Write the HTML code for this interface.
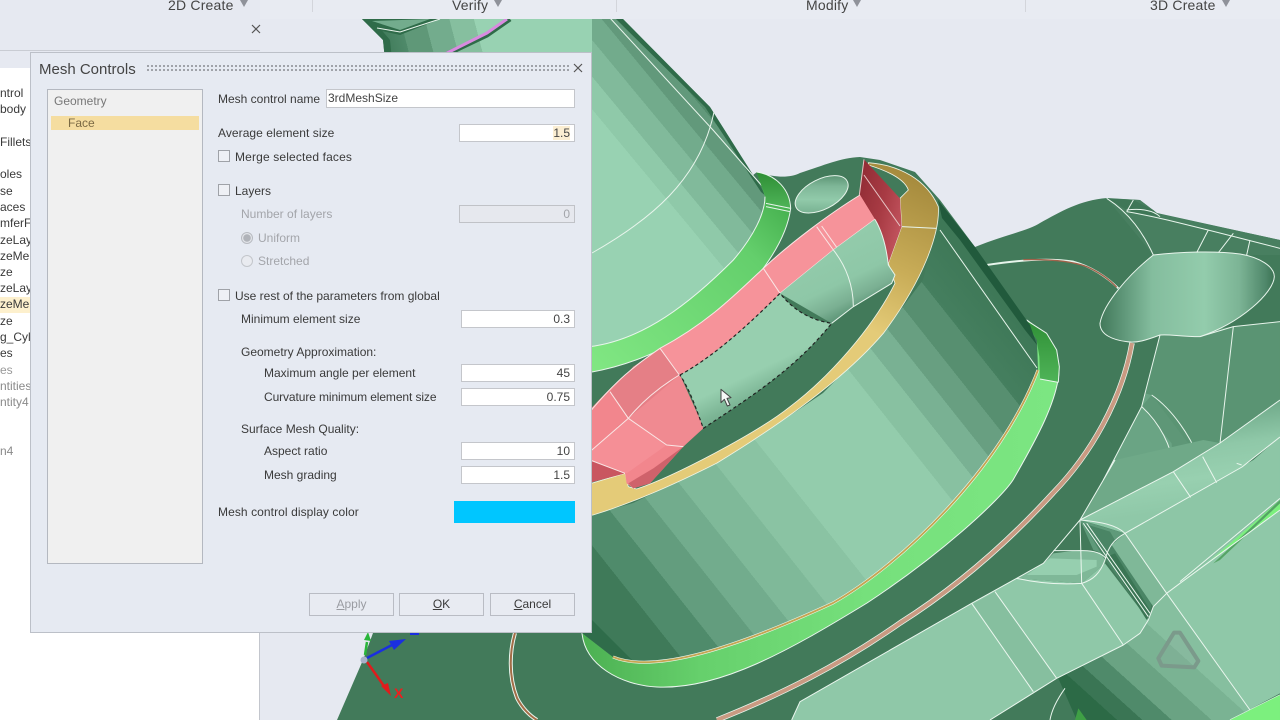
<!DOCTYPE html>
<html><head><meta charset="utf-8"><style>
html,body{margin:0;padding:0;width:1280px;height:720px;overflow:hidden;background:#e6e9f1}
body{position:relative;font-family:"Liberation Sans",sans-serif;font-size:12px;color:#3a3a3a;filter:blur(.3px)}
.a{position:absolute;white-space:nowrap;line-height:16px}
.in{position:absolute;box-sizing:border-box;background:#fff;border:1px solid #c4c6cb;text-align:right;padding-right:4px;line-height:17px;font-size:12px;color:#444}
.cb{position:absolute;box-sizing:border-box;width:12px;height:12px;background:#eef0f5;border:1px solid #9fa2a8}
.btn{position:absolute;box-sizing:border-box;top:593px;width:86px;height:23px;border:1px solid #b9bcc4;background:#e8ebf2;text-align:center;line-height:21px;font-size:12px}
.top{position:absolute;top:-4px;font-size:14px;line-height:18px;color:#444;letter-spacing:.2px}
.tri{position:absolute;top:0;width:0;height:0;border-left:4px solid transparent;border-right:4px solid transparent;border-top:7px solid #8f929a}
.sep{position:absolute;top:0;width:1px;height:12px;background:#d3d5db}
.t{position:absolute;left:0;white-space:nowrap;line-height:16px;color:#3a3a3a}
</style></head><body>
<svg width="1280" height="720" viewBox="0 0 1280 720" style="position:absolute;left:0;top:0" fill="none" stroke-linejoin="round">
<defs>
<linearGradient id="cyl" gradientUnits="userSpaceOnUse" x1="590" y1="600" x2="988" y2="284">
<stop offset="0" stop-color="#3f7a59"/><stop offset=".07" stop-color="#3f7a59"/><stop offset=".07" stop-color="#4f8b6b"/><stop offset=".14" stop-color="#4f8b6b"/><stop offset=".14" stop-color="#639d7e"/><stop offset=".21" stop-color="#639d7e"/><stop offset=".21" stop-color="#72ac8d"/><stop offset=".28" stop-color="#72ac8d"/><stop offset=".28" stop-color="#7fb999"/><stop offset=".36" stop-color="#7fb999"/><stop offset=".36" stop-color="#8ac3a3"/><stop offset=".45" stop-color="#8ac3a3"/><stop offset=".45" stop-color="#93ccac"/><stop offset=".68" stop-color="#93ccac"/><stop offset=".68" stop-color="#88c1a1"/><stop offset=".74" stop-color="#88c1a1"/><stop offset=".74" stop-color="#79b193"/><stop offset=".79" stop-color="#79b193"/><stop offset=".79" stop-color="#689f81"/><stop offset=".84" stop-color="#689f81"/><stop offset=".84" stop-color="#578f70"/><stop offset=".9" stop-color="#578f70"/><stop offset=".9" stop-color="#457f5f"/><stop offset="1" stop-color="#3e7857"/>
</linearGradient>
<linearGradient id="neck" gradientUnits="userSpaceOnUse" x1="540" y1="250" x2="740" y2="84">
<stop offset="0" stop-color="#98d2b2"/><stop offset=".5" stop-color="#98d2b2"/><stop offset=".5" stop-color="#8fc9a9"/><stop offset=".58" stop-color="#8fc9a9"/><stop offset=".58" stop-color="#81ba9b"/><stop offset=".67" stop-color="#81ba9b"/><stop offset=".67" stop-color="#72ab8c"/><stop offset=".75" stop-color="#72ab8c"/><stop offset=".75" stop-color="#62997b"/><stop offset=".83" stop-color="#62997b"/><stop offset=".83" stop-color="#528b6b"/><stop offset=".91" stop-color="#528b6b"/><stop offset=".91" stop-color="#437c5c"/><stop offset="1" stop-color="#3a7352"/>
</linearGradient>
<linearGradient id="topg" gradientUnits="userSpaceOnUse" x1="385" y1="55" x2="500" y2="25">
<stop offset="0" stop-color="#3f7a59"/><stop offset=".2" stop-color="#4f8a6a"/><stop offset=".2" stop-color="#5f9878"/><stop offset=".4" stop-color="#5f9878"/><stop offset=".4" stop-color="#73ac8d"/><stop offset=".6" stop-color="#73ac8d"/><stop offset=".6" stop-color="#86bf9f"/><stop offset=".8" stop-color="#86bf9f"/><stop offset=".8" stop-color="#98d2b2"/><stop offset="1" stop-color="#98d2b2"/>
</linearGradient>
<linearGradient id="gold" x1=".9" y1="0" x2=".7" y2=".42"><stop offset="0" stop-color="#a3883b"/><stop offset=".6" stop-color="#c9ad58"/><stop offset="1" stop-color="#e4cb78"/></linearGradient>
<linearGradient id="hole1" x1="0" y1="0" x2="1" y2="0"><stop offset="0" stop-color="#42795a"/><stop offset=".13" stop-color="#5e9678"/><stop offset=".3" stop-color="#84bd9e"/><stop offset=".6" stop-color="#93ccac"/><stop offset=".8" stop-color="#7cb495"/><stop offset=".95" stop-color="#4f876a"/><stop offset="1" stop-color="#3b7253"/></linearGradient>
<linearGradient id="hole2" x1="0" y1="1" x2="1" y2="0"><stop offset="0" stop-color="#6aa383"/><stop offset=".4" stop-color="#91caaa"/><stop offset=".65" stop-color="#7fb798"/><stop offset="1" stop-color="#447c5c"/></linearGradient>
<linearGradient id="sel" x1=".35" y1=".3" x2=".65" y2=".85"><stop offset="0" stop-color="#97cfaf"/><stop offset=".5" stop-color="#97cfaf"/><stop offset=".75" stop-color="#7cb595"/><stop offset="1" stop-color="#669f7f"/></linearGradient>
<linearGradient id="rgt" x1=".35" y1=".2" x2=".7" y2=".85"><stop offset="0" stop-color="#94ccac"/><stop offset=".6" stop-color="#8ec7a7"/><stop offset=".85" stop-color="#7aaf92"/><stop offset="1" stop-color="#5f9779"/></linearGradient>
<linearGradient id="red" x1="0" y1="0" x2="1" y2=".6"><stop offset="0" stop-color="#8e2a33"/><stop offset=".6" stop-color="#a83b44"/><stop offset="1" stop-color="#c0525c"/></linearGradient>
<linearGradient id="chan" gradientUnits="userSpaceOnUse" x1="800" y1="700" x2="1083" y2="387"><stop offset="0" stop-color="#2c6a46"/><stop offset=".1" stop-color="#2c6a46"/><stop offset=".1" stop-color="#3a7554"/><stop offset=".22" stop-color="#3a7554"/><stop offset=".22" stop-color="#4f8a6a"/><stop offset=".36" stop-color="#4f8a6a"/><stop offset=".36" stop-color="#6aa383"/><stop offset=".55" stop-color="#6aa383"/><stop offset=".55" stop-color="#7ab393"/><stop offset=".75" stop-color="#7ab393"/><stop offset=".75" stop-color="#86bf9f"/><stop offset="1" stop-color="#86bf9f"/></linearGradient>
<linearGradient id="tube" x1=".45" y1=".1" x2=".6" y2=".8"><stop offset="0" stop-color="#6ea888"/><stop offset=".4" stop-color="#8fc8a8"/><stop offset=".7" stop-color="#98d0b0"/><stop offset="1" stop-color="#8fc8a8"/></linearGradient>
<linearGradient id="ringtop" x1="0" y1="0" x2="0" y2="1"><stop offset="0" stop-color="#2f8f36"/><stop offset="1" stop-color="#4fb458"/></linearGradient>
<linearGradient id="ring2" x1="1" y1="0" x2="0" y2="1"><stop offset="0" stop-color="#3aa443"/><stop offset=".3" stop-color="#64cf6c"/><stop offset="1" stop-color="#82e884"/></linearGradient>
<linearGradient id="ring3" x1="0" y1="0" x2="1" y2="0"><stop offset="0" stop-color="#4cb052"/><stop offset=".25" stop-color="#66d06c"/><stop offset=".6" stop-color="#76e07c"/><stop offset="1" stop-color="#7ce682"/></linearGradient>
</defs>

<!-- main dark body -->
<path fill="#427a5a" d="M337,720L363,660L373,633L592,300L757,172C775,178 790,178 800,173C825,165 840,158 860,157L880,160L915,172L940,200L975,247C1005,235 1030,230 1040,223C1060,212 1080,200 1107,198L1140,200L1157,213L1280,240L1280,720Z"/>

<!-- right side of model, zoom-6 coordinates -->
<g transform="translate(940 180) scale(.33333)">
<path fill="#487f60" d="M500,55L640,225L1020,225L1020,180L650,100L600,60Z"/>
<path fill="#3f7757" d="M500,55L580,60L640,90L660,110L570,95Z"/>
<path fill="#5a9473" d="M660,465L880,440L1020,425L1020,660L955,705L840,790L775,830L700,860L605,680L615,640Z"/>
<path fill="#6aa484" d="M615,640L605,680L490,900L660,900L775,830L700,760L635,645Z"/>
<path fill="#5e9777" d="M635,645L775,830L700,870L695,790L605,680Z"/>
<path fill="url(#hole1)" stroke="#e8f5ec" stroke-width="3" d="M480,430C490,370 570,280 640,225C720,215 830,212 900,222C960,232 1003,260 1003,290C1000,340 900,430 780,470C720,470 690,462 660,465C620,480 590,490 560,485C520,480 480,465 480,430Z"/>
<path stroke="#e8f5ec" stroke-width="3" d="M500,55C570,100 610,160 640,225M580,60L560,95M560,95C620,105 650,110 1020,205M560,90C600,85 640,90 660,110M805,150L770,218M880,160L835,218M930,180L920,225M660,465L615,640L605,680L490,900M880,440L840,790M780,470L880,440L1020,425M635,645C700,690 750,770 775,830L825,900M605,680C660,730 695,800 700,860M840,790L905,860M955,705L1020,770"/>
<path stroke="#e8f5ec" stroke-width="6" d="M140,255C250,238 340,235 400,245C450,258 500,290 535,325"/>
<path stroke="#a0624a" stroke-width="4" d="M250,239C340,237 400,245 440,260C480,278 510,300 530,322"/>
</g>
<!-- copper main ring -->
<path stroke="#e8f5ec" stroke-width="5.5" d="M1132,343C1122,400 1090,455 1053,493C1010,540 960,585 900,623C840,665 780,695 717,720"/>
<path stroke="#c99a82" stroke-width="4" d="M1132,343C1122,400 1090,455 1053,493C1010,540 960,585 900,623C840,665 780,695 717,720"/>

<!-- lower right, zoom-7 coordinates -->
<g transform="translate(800 460) scale(.33333)">
<path fill="#6fa988" d="M945,0L840,180L1120,35L1260,-51L1210,-60Z"/>
<path fill="#8fc8a8" d="M1100,400L1140,370L1440,120L1440,700L1290,780L1350,750Z"/>
<path fill="#8dc6a6" d="M975,220L1360,0L1440,-69L1440,120L1140,370L1100,400Z"/>
<path fill="url(#tube)" d="M840,180L1120,35L1260,-51L1440,-180L1440,-69L1326,21L975,220L910,200Z"/>
<path fill="#7cf07e" d="M1140,370L1210,320L1440,120L1440,150L1100,400Z"/>
<path fill="#55a465" d="M1240,310L1440,120L1440,130L1260,300Z"/>
<path fill="url(#chan)" d="M1045,480L1060,440L1100,400L1350,750L1300,780L830,780L775,655L1020,520Z"/>
<path fill="#8fc8a8" d="M650,355L845,370L915,310L1045,480L1020,520L970,555L770,655L570,780L-25,780L0,725L515,430Z"/>
<path fill="#86bf9f" d="M520,432L585,395L770,655L700,695Z"/>
<path fill="#7fb898" d="M730,310L650,355L845,370L915,310L920,280L840,270L760,280Z"/>
<path fill="#96cfaf" d="M680,345L830,345L890,320L890,300L750,295Z"/>
<path fill="#5f9a7a" d="M840,180L975,220L920,285L880,270Z"/>
<path fill="#4a8565" d="M850,190L930,215L1055,430L1045,480L915,300Z"/>
<path fill="#7fb898" d="M975,220L1100,400L1060,440L935,255Z"/>
<path fill="#3a7554" d="M920,290L945,280L1050,450L1040,480Z"/>
<path stroke="#eaf6ee" stroke-width="3" d="M945,0L840,180L730,310L650,355L515,430L0,725L-25,780M840,180L1120,35L1260,-51L1440,-180M975,220L1326,21L1440,-69M840,180C900,185 950,195 975,220L1100,400L1350,750M975,220C940,240 925,260 915,300C900,340 880,360 845,370C780,375 720,370 650,355M760,272L850,272C880,272 905,280 918,295M840,180L845,370L970,555M850,190L1045,470M860,190L1050,460M1020,520L1045,480L1060,440L1100,400L1140,370L1440,150M1020,520L970,555L770,655L570,780M515,430L700,695M585,395L770,655M1120,35L1172,112M1208,-10L1250,68M1310,10L1325,15"/>
<path stroke="#eaf6ee" stroke-width="3" d="M1140,365L1440,115M1290,780L1440,705"/>
<path fill="#7cf07e" d="M1290,780L1440,705L1440,780Z"/>
<path stroke="#e8f5ec" stroke-width="3" d="M795,685C770,720 755,750 750,780"/>
<path fill="#3f9f45" d="M825,780L835,745L860,780Z"/>
<path fill="#8aa69a" fill-opacity=".25" d="M1122,518L1140,518L1195,603L1183,622L1085,617L1075,595Z"/>
<path stroke="#7b9a8b" stroke-width="12" d="M1122,518L1140,518L1195,603L1183,622L1085,617L1075,595Z"/>
</g>

<!-- copper left, bottom -->
<path stroke="#e8f5ec" stroke-width="4" d="M515,633C510,650 508,675 517,698C522,708 530,716 537,720"/>
<path stroke="#a36d47" stroke-width="2" d="M515,633C510,650 508,675 517,698C522,708 530,716 537,720"/>

<!-- bottom bright ring -->
<path fill="url(#ring3)" d="M582,633C585,665 620,685 657,687C720,690 790,650 867,603C940,555 1000,500 1013,480C1030,450 1060,400 1059,367C1058,345 1040,330 1027,320L1038,370C1000,470 900,565 833,603C720,655 650,672 613,657Z"/>
<path stroke="#eaf6ee" stroke-width="1" d="M582,633C585,665 620,685 657,687C720,690 790,650 867,603C940,555 1000,500 1013,480C1030,450 1060,400 1059,367C1058,345 1040,330 1027,320"/>
<g transform="translate(940 180) scale(.33333)">
<path fill="url(#ringtop)" d="M255,420L320,460L350,510L358,560L355,607L300,597L298,530L290,480Z"/>
<path stroke="#eaf6ee" stroke-width="3" d="M255,418L320,460L350,510L358,560L355,607M300,597L355,607"/>
</g>

<!-- lower cylinder -->
<path fill="url(#cyl)" d="M580,518L592,515L633,503L717,463L757,438L823,393L883,333L923,280L937,227L938,200L975,247L1037,340L1038,370C1000,470 900,565 833,603C720,655 650,672 613,657L582,633Z"/>
<path fill="#215a3c" d="M938,200L975,247L1030,325L1037,345L1025,330L960,240L942,218Z"/>
<path fill="#2f6c4a" d="M582,633L592,620L632,660L613,657Z"/>
<path stroke="#e8f5ec" stroke-width="1" d="M940,230L1037,368"/>
<path stroke="#eaf6ee" stroke-width="3" d="M613,657C650,672 720,655 833,603C900,565 1000,470 1038,370"/>
<path stroke="#c5a552" stroke-width="1.8" d="M613,657C650,672 720,655 833,603C900,565 1000,470 1038,370"/>

<!-- neck -->
<path fill="url(#neck)" d="M592,19L623,19L710,107L767,197L760,260L700,320L592,365Z"/>
<path fill="#2f6b49" d="M616,19L623,19L710,107L767,197L761,192L705,107Z"/>
<path stroke="#e8f5ec" stroke-width="1" d="M592,253C650,220 700,180 714,112M610,18L713,130L763,187"/>
<path fill="url(#topg)" d="M362,19L592,19L592,60L385,60L383,40Z"/>
<path fill="#2f6b49" d="M362,19L372,19L390,40L392,60L385,60L383,40Z"/>
<path fill="#2f6b49" d="M362,19L440,19L400,35L378,30Z"/>
<path fill="#73ac8d" d="M372,21L430,19L400,30Z"/>
<path stroke="#e8f5ec" stroke-width="1" d="M377,28L400,32L440,19"/>
<path stroke="#2f6b49" stroke-width="5" d="M510,19L487,35L447,54"/>
<path stroke="#d98ae0" stroke-width="3" d="M507,19L487,33L445,54"/>

<g transform="translate(590 140) scale(.33333)">
<!-- neck ring -->
<path fill="url(#ring2)" d="M-20,700L0,697C160,670 300,590 400,510C510,420 590,300 602,205C600,150 560,105 500,96L525,170C525,220 490,290 430,360C300,490 160,600 0,620L-20,622Z"/>
<path fill="url(#ringtop)" d="M500,98C560,105 600,150 602,205L530,195L525,165Z"/>
<path stroke="#e8f5ec" stroke-width="3" d="M0,697C160,670 300,590 400,510C510,420 590,300 602,205C600,150 560,105 500,96M528,190L602,205M528,200L600,215M525,170C525,220 490,290 430,360C300,490 160,600 0,620"/>

<!-- lug hole -->
<ellipse cx="695" cy="163" rx="86" ry="45" transform="rotate(-27 695 163)" fill="url(#hole2)" stroke="#e8f5ec" stroke-width="3"/>

<!-- gold -->
<path fill="url(#gold)" stroke="#eef3e4" stroke-width="2.5" d="M835,68C930,75 1010,120 1045,200C1050,280 1000,420 880,580C760,720 560,860 381,969C260,1030 129,1089 9,1125L-30,1130L-30,1040L105,1000L115,1040L140,1047C250,1010 500,880 600,800C720,710 850,560 915,430L895,370L935,260L930,175L955,150C945,120 900,95 835,75Z"/>
<path stroke="#e8f5ec" stroke-width="3" d="M935,260L1040,265"/>

<!-- dark red -->
<path fill="url(#red)" d="M822,58L930,175L935,260L895,370L855,238L808,165Z"/>
<path stroke="#e6c5c5" stroke-width="3" d="M822,58L808,165M822,105L930,258"/>

<!-- pink -->
<path fill="#f2868d" d="M-10,820C80,720 130,680 210,625C350,550 430,470 520,385C600,310 720,220 810,165L855,238L730,330L570,460C470,560 370,650 270,705L340,865L280,920L180,1030L130,1045L110,1030L105,1000L-10,1030Z"/>
<path fill="#f6939a" d="M210,625C350,550 430,470 520,385C600,310 720,220 810,165L855,238L730,330L570,460C470,560 370,650 270,705Z"/>
<path fill="#e57f86" d="M60,755L130,680L210,625L268,705L115,835Z"/>
<path fill="#f08a91" d="M115,835L270,705L340,860L280,920L230,915Z"/>
<path fill="#ea7f87" d="M115,835L80,860L120,920L230,915Z"/>
<path fill="#f58f96" d="M0,935L115,835L230,915L110,1000L0,960Z"/>
<path fill="#c95660" d="M0,960L105,1000L0,1028Z"/>
<path fill="#cf626b" d="M280,920L180,1030L130,1045L115,1030L190,985Z"/>
<path stroke="#f9e6e5" stroke-width="3" d="M0,815C80,720 130,680 210,625C350,550 430,470 520,385C600,310 720,220 810,165M210,625L268,705M60,755L115,835L230,915L280,920M0,935L115,835C160,780 210,740 268,705M520,385L570,460M680,260L730,330M695,258L740,322M855,238L730,330L570,460M0,960L105,1000"/>

<!-- green selected + right -->
<path fill="url(#rgt)" d="M570,460L730,330L855,238C880,280 890,330 895,375L915,405L905,430L790,500L725,550Z"/>
<path fill="url(#sel)" d="M270,705C370,650 470,560 570,460C610,510 660,540 725,550C620,680 500,760 340,865C320,810 300,750 270,705Z"/>
<path stroke="#e8f5ec" stroke-width="3" d="M730,330C770,380 790,440 790,500M855,238C880,280 890,330 895,375L915,405L905,430L790,500L725,550"/>
<path stroke="#222" stroke-width="3.5" stroke-dasharray="10 8" d="M270,705C370,650 470,560 570,460C610,510 660,540 725,550C620,680 500,760 340,865C320,810 300,750 270,705Z"/>

<!-- cursor -->
<path fill="#f5f8f6" stroke="#444" stroke-width="3" d="M393,748L393,788L403,778L412,798L420,795L411,775L423,773Z"/>
</g>

<!-- background panel layers -->
<rect x="0" y="0" width="1280" height="19" fill="#e8ebf2"/>
<rect x="0" y="0" width="260" height="720" fill="#e6e9f1"/>
<rect x="0" y="68" width="32" height="570" fill="#fff"/>
<rect x="0" y="50" width="260" height="1" fill="#c9ccd3"/>
<rect x="0" y="630" width="259" height="90" fill="#fff"/>
<rect x="259" y="630" width="1" height="90" fill="#c3c6cd"/>

<!-- triad -->
<path stroke="#2ab53a" stroke-width="2.5" d="M365,655L367,642"/><path fill="#2ab53a" d="M364,640L368,632L371,641Z"/>
<path stroke="#1a2fe0" stroke-width="2.5" d="M367,658L392,645"/><path fill="#1a2fe0" d="M389,641L406,639L394,650Z"/>
<path stroke="#e01c1c" stroke-width="2.5" d="M367,662L384,686"/><path fill="#e01c1c" d="M381,686L388,683L391,696Z"/>
<circle cx="364" cy="660" r="3.5" fill="#a9b0c9"/>
<path fill="#1a2fe0" d="M410,632H419V635H410Z"/>
</svg>
<div class="a" style="left:394px;top:685px;color:#f01d1d;font-size:14px;font-weight:bold;line-height:16px">X</div>

<!-- toolbar -->
<div class="top" style="left:168px">2D Create</div><div class="tri" style="left:240px"></div><div class="sep" style="left:312px"></div>
<div class="top" style="left:452px">Verify</div><div class="tri" style="left:494px"></div><div class="sep" style="left:616px"></div>
<div class="top" style="left:806px">Modify</div><div class="tri" style="left:853px"></div><div class="sep" style="left:1025px"></div>
<div class="top" style="left:1150px">3D Create</div><div class="tri" style="left:1222px"></div>
<svg width="12" height="12" style="position:absolute;left:250px;top:23px" fill="none" stroke="#555" stroke-width="1.2"><path d="M2,2L10,10M10,2L2,10"/></svg>

<!-- tree clip -->
<div style="position:absolute;left:0;top:68px;width:30px;height:570px;overflow:hidden">
<div style="position:absolute;left:0;top:229px;width:30px;height:16px;background:#fdf0cd"></div>
<div class="t" style="top:17px">ntrol</div>
<div class="t" style="top:33px">body</div>
<div class="t" style="top:66px">Fillets</div>
<div class="t" style="top:98px">oles</div>
<div class="t" style="top:115px">se</div>
<div class="t" style="top:131px">aces</div>
<div class="t" style="top:147px">mferF</div>
<div class="t" style="top:164px">zeLay</div>
<div class="t" style="top:180px">zeMe</div>
<div class="t" style="top:196px">ze</div>
<div class="t" style="top:212px">zeLay</div>
<div class="t" style="top:228px">zeMer</div>
<div class="t" style="top:245px">ze</div>
<div class="t" style="top:261px">g_Cyli</div>
<div class="t" style="top:277px">es</div>
<div class="t" style="top:294px;color:#999">es</div>
<div class="t" style="top:310px;color:#8a8a8a">ntities_</div>
<div class="t" style="top:326px;color:#8a8a8a">ntity4</div>
<div class="t" style="top:375px;color:#8a8a8a">n4</div>
</div>

<!-- dialog -->
<div style="position:absolute;left:30px;top:52px;width:562px;height:581px;box-sizing:border-box;background:#e6eaf2;border:1px solid #bcc0c8"></div>
<div class="a" style="left:39px;top:62px;font-size:15px;color:#444">Mesh Controls</div>
<div style="position:absolute;left:147px;top:65px;width:422px;height:8px;background-image:radial-gradient(circle at 1px 1px,#8d9096 .9px,transparent 1.1px);background-size:4px 4px"></div>
<svg width="12" height="12" style="position:absolute;left:572px;top:62px" fill="none" stroke="#555" stroke-width="1.2"><path d="M2,2L10,10M10,2L2,10"/></svg>

<div style="position:absolute;left:47px;top:89px;width:156px;height:475px;box-sizing:border-box;background:#f0f0f0;border:1px solid #b4b8c0"></div>
<div class="a" style="left:54px;top:93px;color:#777">Geometry</div>
<div style="position:absolute;left:51px;top:116px;width:148px;height:14px;background:#f5dda0"></div>
<div class="a" style="left:68px;top:115px;color:#7b6a44">Face</div>

<div class="a" style="left:218px;top:91px">Mesh control name</div>
<div class="in" style="left:326px;top:89px;width:249px;height:19px;text-align:left;padding-left:1px">3rdMeshSize</div>
<div class="a" style="left:218px;top:125px;letter-spacing:.06px">Average element size</div>
<div class="in" style="left:459px;top:124px;width:116px;height:18px;line-height:16px"><span style="background:#fbeed2">1.5</span></div>
<div class="cb" style="left:218px;top:150px"></div><div class="a" style="left:235px;top:149px;letter-spacing:.15px">Merge selected faces</div>
<div class="cb" style="left:218px;top:184px"></div><div class="a" style="left:235px;top:183px">Layers</div>
<div class="a" style="left:241px;top:206px;color:#a3a5aa">Number of layers</div>
<div class="in" style="left:459px;top:205px;width:116px;height:18px;background:#e6e8ee;color:#a3a5aa;line-height:16px;border-color:#c0c2c7">0</div>
<div style="position:absolute;left:241px;top:232px;width:12px;height:12px;box-sizing:border-box;border-radius:50%;border:1px solid #b8bbc1;background:radial-gradient(circle,#b0b3b9 3.5px,#e3e5ea 4px)"></div>
<div class="a" style="left:258px;top:230px;color:#a3a5aa">Uniform</div>
<div style="position:absolute;left:241px;top:255px;width:12px;height:12px;box-sizing:border-box;border-radius:50%;border:1px solid #c3c6cb;background:#e9ebf0"></div>
<div class="a" style="left:258px;top:253px;color:#a3a5aa">Stretched</div>
<div class="cb" style="left:218px;top:289px"></div><div class="a" style="left:235px;top:288px">Use rest of the parameters from global</div>
<div class="a" style="left:241px;top:311px">Minimum element size</div>
<div class="in" style="left:461px;top:310px;width:114px;height:18px;line-height:16px">0.3</div>
<div class="a" style="left:241px;top:344px">Geometry Approximation:</div>
<div class="a" style="left:264px;top:365px">Maximum angle per element</div>
<div class="in" style="left:461px;top:364px;width:114px;height:18px;line-height:16px">45</div>
<div class="a" style="left:264px;top:389px;letter-spacing:-.1px">Curvature minimum element size</div>
<div class="in" style="left:461px;top:388px;width:114px;height:18px;line-height:16px">0.75</div>
<div class="a" style="left:241px;top:421px">Surface Mesh Quality:</div>
<div class="a" style="left:264px;top:443px">Aspect ratio</div>
<div class="in" style="left:461px;top:442px;width:114px;height:18px;line-height:16px">10</div>
<div class="a" style="left:264px;top:467px">Mesh grading</div>
<div class="in" style="left:461px;top:466px;width:114px;height:18px;line-height:16px">1.5</div>
<div class="a" style="left:218px;top:504px;letter-spacing:.08px">Mesh control display color</div>
<div style="position:absolute;left:454px;top:501px;width:121px;height:22px;background:#00c6ff"></div>
<div class="btn" style="left:309px;width:85px;color:#9a9ca2"><u>A</u>pply</div>
<div class="btn" style="left:399px;width:85px"><u>O</u>K</div>
<div class="btn" style="left:490px;width:85px"><u>C</u>ancel</div>
</body></html>
